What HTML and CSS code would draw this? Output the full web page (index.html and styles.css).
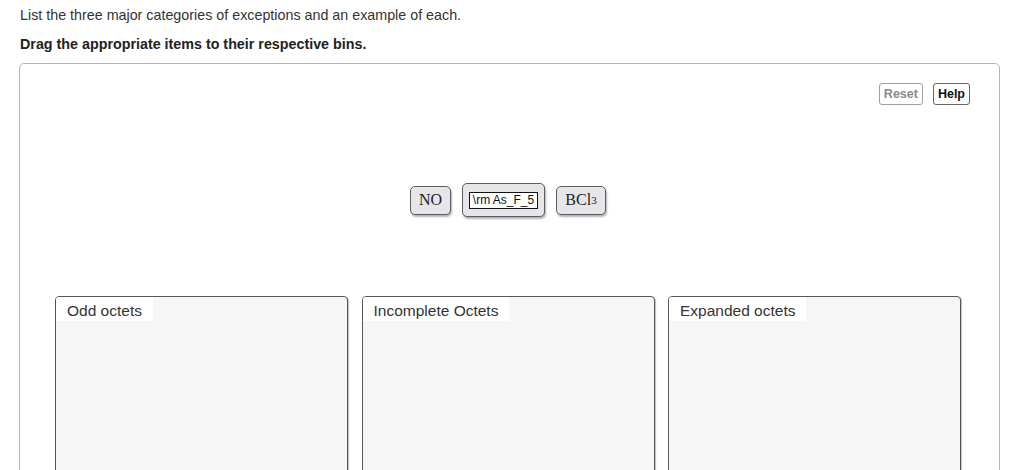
FILE: index.html
```html
<!DOCTYPE html>
<html>
<head>
<meta charset="utf-8">
<link rel="stylesheet" href="styles.css">
</head>
<body>
<div class="page">
  <p class="prompt">List the three major categories of exceptions and an example of each.</p>
  <p class="instr">Drag the appropriate items to their respective bins.</p>
  <div class="board">
    <div class="toolbar">
      <button class="btn btn-reset">Reset</button>
      <button class="btn btn-help">Help</button>
    </div>
    <div class="tiles">
      <div class="tile tile-serif tile-no">NO</div>
      <div class="tile tile-raw"><span class="raw">\rm As_F_5</span></div>
      <div class="tile tile-serif tile-bcl">BCl<sub>3</sub></div>
    </div>
    <div class="bins">
      <div class="bin"><div class="bin-label">Odd octets</div></div>
      <div class="bin"><div class="bin-label">Incomplete Octets</div></div>
      <div class="bin"><div class="bin-label">Expanded octets</div></div>
    </div>
  </div>
</div>
</body>
</html>
```
FILE: styles.css
```css
html, body {
  margin: 0;
  padding: 0;
  background: #fff;
  overflow: hidden;
}
body {
  font-family: "Liberation Sans", Arial, sans-serif;
  color: #222;
}
.page {
  padding: 0 24px 0 19px;
}
.prompt {
  margin: 0;
  padding: 7px 0 0 1px;
  font-size: 14.3px;
  line-height: 17px;
  color: #333;
}
.instr {
  margin: 0;
  padding: 12px 0 0 1px;
  font-size: 14.3px;
  line-height: 17px;
  font-weight: bold;
  color: #222;
}
.board {
  margin-top: 10px;
  border: 1px solid #b5b5b5;
  border-radius: 5px;
  height: 480px;
  padding: 19px 29px 0 35px;
  box-sizing: border-box;
}
.toolbar {
  display: flex;
  justify-content: flex-end;
  gap: 10px;
}
.btn {
  font-family: "Liberation Sans", Arial, sans-serif;
  font-size: 12.5px;
  font-weight: bold;
  height: 22px;
  padding: 0 4px;
  background: #fff;
  border-radius: 3px;
  line-height: 18px;
}
.btn-reset {
  color: #8a8a8a;
  border: 1px solid #a0a0a0;
}
.btn-help {
  color: #111;
  border: 1px solid #666;
}
.tiles {
  display: flex;
  justify-content: center;
  align-items: center;
  gap: 11px;
  margin-top: 78px;
  height: 34px;
  padding-right: 9px;
}
.tile {
  box-sizing: border-box;
  background: #e6e6e8;
  border: 1.5px solid #5c5c66;
  border-radius: 5px;
  box-shadow: 1px 2px 2px rgba(0,0,0,0.3);
  display: flex;
  align-items: center;
  justify-content: center;
}
.tile-serif {
  font-family: "Liberation Serif", "Times New Roman", serif;
  font-size: 16px;
  color: #222;
  height: 29px;
}
.tile-no {
  width: 41px;
}
.tile-bcl {
  width: 50px;
}
.tile-bcl sub {
  font-size: 11px;
  vertical-align: -3px;
}
.tile-raw {
  width: 83px;
  height: 34px;
}
.raw {
  display: block;
  background: #fff;
  border: 1px solid #111;
  font-size: 12px;
  line-height: 15px;
  padding: 0 3px;
  color: #111;
}
.bins {
  display: grid;
  grid-template-columns: 293px 293px 293px;
  column-gap: 13.5px;
  margin-top: 79px;
}
.bin {
  box-sizing: border-box;
  height: 200px;
  background: #f6f6f6;
  border: 1px solid #555560;
  border-radius: 4px;
  box-shadow: 1px 1px 1px rgba(0,0,0,0.25);
}
.bin-label {
  display: inline-block;
  background: #fff;
  padding: 0 11px 0 11px;
  height: 24px;
  line-height: 28px;
  font-size: 15.5px;
  color: #333;
  border-top-left-radius: 3px;
}
```
